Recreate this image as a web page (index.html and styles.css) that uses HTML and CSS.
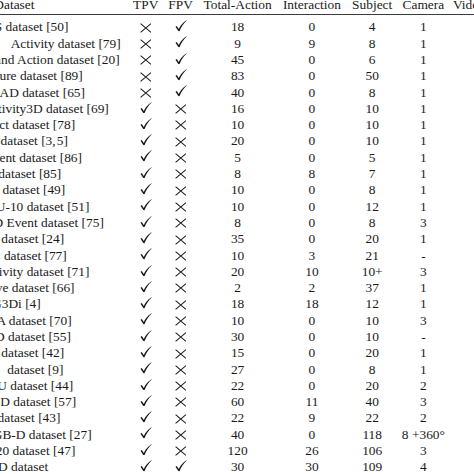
FILE: index.html
```html
<!DOCTYPE html>
<html lang="en">
<head>
<meta charset="utf-8">
<title>Dataset comparison</title>
<link rel="stylesheet" href="styles.css">
</head>
<body>
<svg class="defs" aria-hidden="true">
  <symbol id="yes" viewBox="0 0 12 12"><path d="M0.3 7.1 L1.6 6.2 L3.7 9.2 C5.6 5.5 8.2 2.3 11.6 0.2 L11.9 0.6 C8.8 3.3 6.3 7 4.4 11.7 L3.4 11.7 Z"/></symbol>
  <symbol id="no" viewBox="0 0 12 10"><path d="M0.6 0.4 L11.4 9.6 M11.4 0.4 L0.6 9.6"/></symbol>
</svg>
<div class="page">
<table class="survey">
  <thead>
    <tr><th class="col-name">Dataset</th><th>TPV</th><th>FPV</th><th class="num">Total-Action</th><th class="num">Interaction</th><th class="num">Subject</th><th class="cam">Camera</th><th class="col-video">Videos</th></tr>
  </thead>
  <tbody>
    <tr><td class="name">UTokyo ADLS dataset [50]</td><td><svg class="no"><use href="#no"/></svg></td><td><svg class="yes"><use href="#yes"/></svg></td><td class="num">18</td><td class="num">0</td><td class="num">4</td><td class="cam">1</td></tr>
    <tr><td class="name">Egocentric FP&emsp;Activity dataset [79]</td><td><svg class="no"><use href="#no"/></svg></td><td><svg class="yes"><use href="#yes"/></svg></td><td class="num">9</td><td class="num">9</td><td class="num">8</td><td class="cam">1</td></tr>
    <tr><td class="name">FirstPerson Hand Action dataset [20]</td><td><svg class="no"><use href="#no"/></svg></td><td><svg class="yes"><use href="#yes"/></svg></td><td class="num">45</td><td class="num">0</td><td class="num">6</td><td class="cam">1</td></tr>
    <tr><td class="name">EgoHand Gesture dataset [89]</td><td><svg class="no"><use href="#no"/></svg></td><td><svg class="yes"><use href="#yes"/></svg></td><td class="num">83</td><td class="num">0</td><td class="num">50</td><td class="cam">1</td></tr>
    <tr><td class="name">Egocentric HSAD dataset [65]</td><td><svg class="no"><use href="#no"/></svg></td><td><svg class="yes"><use href="#yes"/></svg></td><td class="num">40</td><td class="num">0</td><td class="num">8</td><td class="cam">1</td></tr>
    <tr><td class="name">MSR DailyActivity3D dataset [69]</td><td><svg class="yes"><use href="#yes"/></svg></td><td><svg class="no"><use href="#no"/></svg></td><td class="num">16</td><td class="num">0</td><td class="num">10</td><td class="cam">1</td></tr>
    <tr><td class="name">Texas UTKinect dataset [78]</td><td><svg class="yes"><use href="#yes"/></svg></td><td><svg class="no"><use href="#no"/></svg></td><td class="num">10</td><td class="num">0</td><td class="num">10</td><td class="cam">1</td></tr>
    <tr><td class="name">MSRC Action dataset [3,&#8202;5]</td><td><svg class="yes"><use href="#yes"/></svg></td><td><svg class="no"><use href="#no"/></svg></td><td class="num">20</td><td class="num">0</td><td class="num">10</td><td class="cam">1</td></tr>
    <tr><td class="name">Concurrent Event dataset [86]</td><td><svg class="yes"><use href="#yes"/></svg></td><td><svg class="no"><use href="#no"/></svg></td><td class="num">5</td><td class="num">0</td><td class="num">5</td><td class="cam">1</td></tr>
    <tr><td class="name">SBU Kinect-I dataset [85]</td><td><svg class="yes"><use href="#yes"/></svg></td><td><svg class="no"><use href="#no"/></svg></td><td class="num">8</td><td class="num">8</td><td class="num">7</td><td class="cam">1</td></tr>
    <tr><td class="name">Kinect Action&ensp;dataset [49]</td><td><svg class="yes"><use href="#yes"/></svg></td><td><svg class="no"><use href="#no"/></svg></td><td class="num">10</td><td class="num">0</td><td class="num">8</td><td class="cam">1</td></tr>
    <tr><td class="name">Florence SYSU-10 dataset [51]</td><td><svg class="yes"><use href="#yes"/></svg></td><td><svg class="no"><use href="#no"/></svg></td><td class="num">10</td><td class="num">0</td><td class="num">12</td><td class="cam">1</td></tr>
    <tr><td class="name">Multi-View 3D Event dataset [75]</td><td><svg class="yes"><use href="#yes"/></svg></td><td><svg class="no"><use href="#no"/></svg></td><td class="num">8</td><td class="num">0</td><td class="num">8</td><td class="cam">3</td></tr>
    <tr><td class="name">Kinect2 MAD dataset [24]</td><td><svg class="yes"><use href="#yes"/></svg></td><td><svg class="no"><use href="#no"/></svg></td><td class="num">35</td><td class="num">0</td><td class="num">20</td><td class="cam">1</td></tr>
    <tr><td class="name">Kinect Mocap&ensp;dataset [77]</td><td><svg class="yes"><use href="#yes"/></svg></td><td><svg class="no"><use href="#no"/></svg></td><td class="num">10</td><td class="num">3</td><td class="num">21</td><td class="cam">-</td></tr>
    <tr><td class="name">Multiview Activity dataset [71]</td><td><svg class="yes"><use href="#yes"/></svg></td><td><svg class="no"><use href="#no"/></svg></td><td class="num">20</td><td class="num">10</td><td class="num">10+</td><td class="cam">3</td></tr>
    <tr><td class="name">TNO ShakeFive dataset [66]</td><td><svg class="yes"><use href="#yes"/></svg></td><td><svg class="no"><use href="#no"/></svg></td><td class="num">2</td><td class="num">2</td><td class="num">37</td><td class="cam">1</td></tr>
    <tr><td class="name">Multi-player G3Di [4]</td><td><svg class="yes"><use href="#yes"/></svg></td><td><svg class="no"><use href="#no"/></svg></td><td class="num">18</td><td class="num">18</td><td class="num">12</td><td class="cam">1</td></tr>
    <tr><td class="name">Kinect NUCLA dataset [70]</td><td><svg class="yes"><use href="#yes"/></svg></td><td><svg class="no"><use href="#no"/></svg></td><td class="num">10</td><td class="num">0</td><td class="num">10</td><td class="cam">3</td></tr>
    <tr><td class="name">UWA Multi-3D dataset [55]</td><td><svg class="yes"><use href="#yes"/></svg></td><td><svg class="no"><use href="#no"/></svg></td><td class="num">30</td><td class="num">0</td><td class="num">10</td><td class="cam">-</td></tr>
    <tr><td class="name">Online RGBD dataset [42]</td><td><svg class="yes"><use href="#yes"/></svg></td><td><svg class="no"><use href="#no"/></svg></td><td class="num">15</td><td class="num">0</td><td class="num">20</td><td class="cam">1</td></tr>
    <tr><td class="name">UTD-MHAD&emsp;dataset [9]</td><td><svg class="yes"><use href="#yes"/></svg></td><td><svg class="no"><use href="#no"/></svg></td><td class="num">27</td><td class="num">0</td><td class="num">8</td><td class="cam">1</td></tr>
    <tr><td class="name">Multiview PKU dataset [44]</td><td><svg class="yes"><use href="#yes"/></svg></td><td><svg class="no"><use href="#no"/></svg></td><td class="num">22</td><td class="num">0</td><td class="num">20</td><td class="cam">2</td></tr>
    <tr><td class="name">NTU60 RGB+D dataset [57]</td><td><svg class="yes"><use href="#yes"/></svg></td><td><svg class="no"><use href="#no"/></svg></td><td class="num">60</td><td class="num">11</td><td class="num">40</td><td class="cam">3</td></tr>
    <tr><td class="name">M2I Kinect-2 dataset [43]</td><td><svg class="yes"><use href="#yes"/></svg></td><td><svg class="no"><use href="#no"/></svg></td><td class="num">22</td><td class="num">9</td><td class="num">22</td><td class="cam">2</td></tr>
    <tr><td class="name">Varying-Vi RGB-D dataset [27]</td><td><svg class="yes"><use href="#yes"/></svg></td><td><svg class="no"><use href="#no"/></svg></td><td class="num">40</td><td class="num">0</td><td class="num">118</td><td class="cam">8 +360&deg;</td></tr>
    <tr><td class="name">NTURGBD 120 dataset [47]</td><td><svg class="yes"><use href="#yes"/></svg></td><td><svg class="no"><use href="#no"/></svg></td><td class="num">120</td><td class="num">26</td><td class="num">106</td><td class="cam">3</td></tr>
    <tr><td class="name">Ego-Exo MHID dataset</td><td><svg class="yes"><use href="#yes"/></svg></td><td><svg class="yes"><use href="#yes"/></svg></td><td class="num">30</td><td class="num">30</td><td class="num">109</td><td class="cam">4</td></tr>
  </tbody>
</table>
</div>
</body>
</html>
```

FILE: styles.css
```css
html, body {
  margin: 0;
  padding: 0;
  background: #ffffff;
}

.defs {
  position: absolute;
  width: 0;
  height: 0;
  overflow: hidden;
}

.page {
  width: 474px;
  height: 474px;
  overflow: hidden;
}

.survey {
  width: max-content;
  border-collapse: separate;
  border-spacing: 0;
  margin-left: -84px;
  margin-top: -3.2px;
  font-family: "Liberation Serif", "Times New Roman", serif;
  font-size: 13.4px;
  line-height: 16.3px;
  color: #1a1a1a;
  white-space: nowrap;
}

.survey th,
.survey td {
  padding: 0 5px;
  text-align: center;
  font-weight: normal;
}

.survey th.num,
.survey td.num {
  padding: 0 5.6px;
}

.survey th.cam,
.survey td.cam {
  padding: 0 4px;
}

.survey thead th {
  padding-bottom: 1.2px;
  border-bottom: 1px solid #3c3c3c;
}

.survey th.col-name {
  text-align: left;
  padding-left: 78.3px;
}

.survey th.col-video {
  text-align: left;
  padding-left: 4px;
}

.survey td.name {
  text-align: left;
  width: 202px;
}

.survey tbody tr:first-child td {
  padding-top: 4.06px;
}

.yes {
  display: inline-block;
  width: 12px;
  height: 11.6px;
  vertical-align: -0.3px;
  fill: #1a1a1a;
}

.no {
  display: inline-block;
  width: 11.6px;
  height: 10px;
  vertical-align: -1.3px;
  fill: none;
  stroke: #1a1a1a;
  stroke-width: 1.1;
}
```
